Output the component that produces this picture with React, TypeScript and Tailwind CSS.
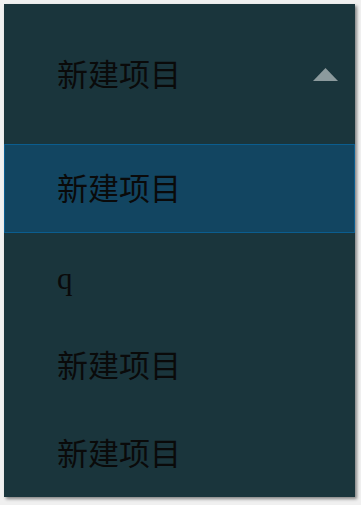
import React from "react";

const font = { fontFamily: '"Liberation Serif", "Noto Sans CJK SC", serif' };

export default function App() {
  const items = ["新建项目", "q", "新建项目", "新建项目"];
  return (
    <div className="w-[361px] h-[505px] bg-[#f0f0f0] p-[4px]" style={font}>
      <div className="w-[351px] h-[493px] bg-[#1a353c] shadow-[2px_2px_3px_rgba(0,0,0,0.45)] flex flex-col">
        <div className="h-[140px] flex items-center justify-between pl-[53px] pr-[17px] text-[31px] text-[#0a0a0a]">
          <span className="pt-[4px]">新建项目</span>
          <svg width="25" height="13" viewBox="0 0 25 13">
            <polygon points="12.5,0 25,13 0,13" fill="#8c9a9d" />
          </svg>
        </div>
        <div className="h-[89px] flex items-center pl-[52px] pt-[4px] border border-[#0b5d8f] bg-[#124561] text-[31px] text-[#0a0a0a]">
          新建项目
        </div>
        {items.slice(1).map((t, i) => (
          <div key={i} className="h-[88px] flex items-center pl-[53px] pt-[4px] text-[31px] text-[#0a0a0a]">
            {t}
          </div>
        ))}
      </div>
    </div>
  );
}
